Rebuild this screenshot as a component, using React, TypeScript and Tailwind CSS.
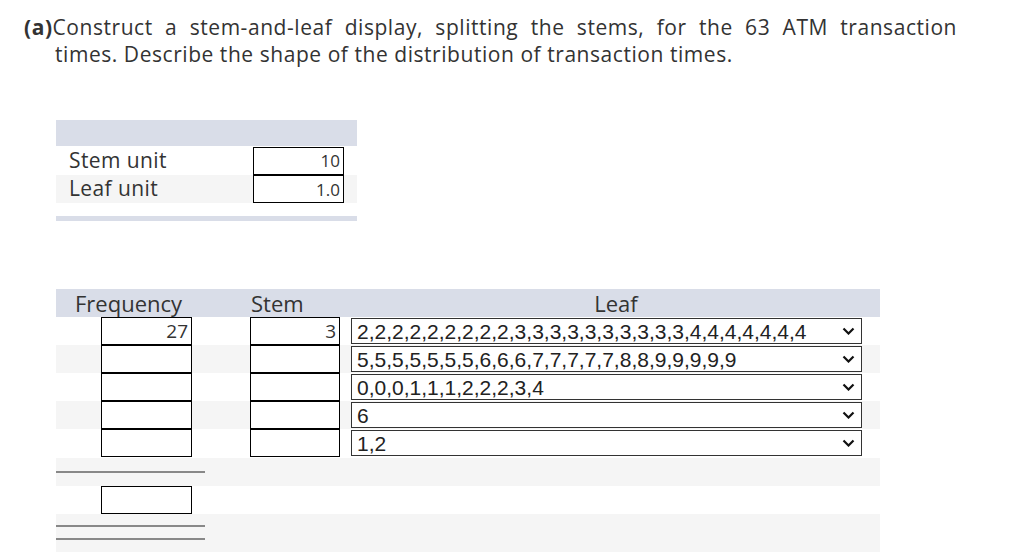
import React from "react"

const body = "font-['Open_Sans','Lato',sans-serif] text-[#333]"

const leaves = [
  "2,2,2,2,2,2,2,2,2,3,3,3,3,3,3,3,3,3,3,4,4,4,4,4,4,4",
  "5,5,5,5,5,5,5,6,6,6,7,7,7,7,7,8,8,9,9,9,9,9",
  "0,0,0,1,1,1,2,2,2,3,4",
  "6",
  "1,2",
]

function Chevron() {
  return (
    <svg width="13" height="8" viewBox="0 0 13 8" className="shrink-0">
      <path d="M1.5 1.5l5 5 5-5" fill="none" stroke="#111" strokeWidth="2.2" />
    </svg>
  )
}

function Box({ value, className = "" }: { value?: string; className?: string }) {
  return (
    <div
      className={`flex h-[28px] items-center justify-end border border-black bg-white pr-[3px] leading-none ${className}`}
    >
      {value}
    </div>
  )
}

function LeafSelect({ value }: { value: string }) {
  return (
    <div className="flex h-[26px] w-[511px] items-center justify-between border border-[#333] bg-white pl-[5px] pr-[6px] font-['Liberation_Sans',Arial,sans-serif] text-[21px] leading-none text-[#222]">
      <span>{value}</span>
      <Chevron />
    </div>
  )
}

export default function App() {
  return (
    <div className={`min-h-[553px] w-[1035px] bg-white ${body}`}>
      <div className="pt-[14px] pr-[78px] pl-[55px] text-[21px] leading-[27px] tracking-[0.55px]">
        <div className="-ml-[31px] whitespace-nowrap text-justify [text-align-last:justify]">
          <b className="font-bold">(a)</b>Construct a stem-and-leaf display, splitting the stems, for the 63 ATM transaction
        </div>
        <div>times. Describe the shape of the distribution of transaction times.</div>
      </div>

      {/* unit table */}
      <div className="mt-[52px] ml-[56px] w-[301px]">
        <div className="h-[26px] bg-[#d9dde8]" />
        <div className="flex h-[29px] items-center">
          <span className="w-[197px] pl-[13px] text-[21px] tracking-[0.4px]">Stem unit</span>
          <Box value="10" className="w-[91px] text-[17px]" />
        </div>
        <div className="flex h-[28px] items-center bg-[#f5f5f5]">
          <span className="w-[197px] pl-[13px] text-[21px] tracking-[0.4px]">Leaf unit</span>
          <Box value="1.0" className="w-[91px] text-[17px]" />
        </div>
        <div className="mt-[13px] h-[5px] bg-[#d9dde8]" />
      </div>

      {/* stem-and-leaf table */}
      <div className="mt-[68px] ml-[56px] w-[824px]">
        <div className="flex h-[28px] items-center bg-[#d9dde8] text-[22px] leading-none">
          <span className="w-[195px] pl-[19px]">Frequency</span>
          <span className="w-[101px]">Stem</span>
          <span className="flex-1 text-center">Leaf</span>
        </div>
        {leaves.map((leaf, i) => (
          <div key={i} className={`flex h-[28px] items-center ${i % 2 === 1 ? "bg-[#f5f5f5]" : ""}`}>
            <Box value={i === 0 ? "27" : ""} className="ml-[45px] w-[91px] text-[19px]" />
            <Box value={i === 0 ? "3" : ""} className="ml-[58px] w-[90px] text-[19px]" />
            <div className="ml-[11px]">
              <LeafSelect value={leaf} />
            </div>
          </div>
        ))}
        <div className="mt-[1px] flex h-[28px] items-center bg-[#f5f5f5]">
          <div className="h-[2px] w-[149px] bg-[#888]" />
        </div>
        <div className="flex h-[28px] items-center">
          <Box className="ml-[45px] w-[91px]" />
        </div>
        <div className="flex h-[38px] flex-col bg-[#f5f5f5] pt-[11px]">
          <div className="h-[2px] w-[149px] bg-[#888]" />
          <div className="mt-[11px] h-[2px] w-[149px] bg-[#888]" />
        </div>
      </div>
    </div>
  )
}
